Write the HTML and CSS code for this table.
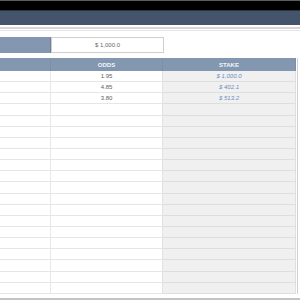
FILE: index.html
```html
<!DOCTYPE html>
<html>
<head>
<meta charset="utf-8">
<link rel="stylesheet" href="styles.css">
</head>
<body>
<div class="page">
  <div class="topblack"></div>
  <div class="titlebar"></div>
  <div class="rule rule-a"></div>
  <div class="rule rule-b"></div>
  <div class="bankroll">
    <div class="bank-label"></div>
    <div class="bank-value">$ 1,000.0</div>
  </div>
  <div class="table">
    <div class="row head">
      <div class="cell c1"></div>
      <div class="cell c2">ODDS</div>
      <div class="cell c3">STAKE</div>
    </div>
    <div class="row"><div class="cell c1"></div><div class="cell c2">1.95</div><div class="cell c3">$ 1,000.0</div></div>
    <div class="row"><div class="cell c1"></div><div class="cell c2">4.85</div><div class="cell c3">$ 402.1</div></div>
    <div class="row"><div class="cell c1"></div><div class="cell c2">3.80</div><div class="cell c3">$ 513.2</div></div>
    <div class="row"><div class="cell c1"></div><div class="cell c2"></div><div class="cell c3"></div></div>
    <div class="row"><div class="cell c1"></div><div class="cell c2"></div><div class="cell c3"></div></div>
    <div class="row"><div class="cell c1"></div><div class="cell c2"></div><div class="cell c3"></div></div>
    <div class="row"><div class="cell c1"></div><div class="cell c2"></div><div class="cell c3"></div></div>
    <div class="row"><div class="cell c1"></div><div class="cell c2"></div><div class="cell c3"></div></div>
    <div class="row"><div class="cell c1"></div><div class="cell c2"></div><div class="cell c3"></div></div>
    <div class="row"><div class="cell c1"></div><div class="cell c2"></div><div class="cell c3"></div></div>
    <div class="row"><div class="cell c1"></div><div class="cell c2"></div><div class="cell c3"></div></div>
    <div class="row"><div class="cell c1"></div><div class="cell c2"></div><div class="cell c3"></div></div>
    <div class="row"><div class="cell c1"></div><div class="cell c2"></div><div class="cell c3"></div></div>
    <div class="row"><div class="cell c1"></div><div class="cell c2"></div><div class="cell c3"></div></div>
    <div class="row"><div class="cell c1"></div><div class="cell c2"></div><div class="cell c3"></div></div>
    <div class="row"><div class="cell c1"></div><div class="cell c2"></div><div class="cell c3"></div></div>
    <div class="row"><div class="cell c1"></div><div class="cell c2"></div><div class="cell c3"></div></div>
    <div class="row"><div class="cell c1"></div><div class="cell c2"></div><div class="cell c3"></div></div>
    <div class="row"><div class="cell c1"></div><div class="cell c2"></div><div class="cell c3"></div></div>
    <div class="row"><div class="cell c1"></div><div class="cell c2"></div><div class="cell c3"></div></div>
  </div>
  <div class="bottomband"></div>
</div>
</body>
</html>
```
FILE: styles.css
```css
html, body {
  margin: 0;
  padding: 0;
  background: #ffffff;
}
body {
  font-family: "Liberation Sans", Arial, sans-serif;
  width: 300px;
  height: 300px;
  overflow: hidden;
}
.page {
  display: flex;
  flex-direction: column;
  width: 300px;
  height: 300px;
}
.topblack {
  height: 9px;
  background: #000000;
  border-top: 1px solid #5c5c5c;
}
.titlebar {
  height: 14px;
  background: #44546a;
  border-top: 1px solid #2c3544;
}
.rule {
  height: 1px;
}
.rule-a {
  margin-top: 2px;
  height: 2px;
  background: #dcd4d4;
}
.rule-b {
  margin-top: 1px;
  background: #e2e6ec;
}
.bankroll {
  display: flex;
  margin-top: 6px;
  height: 16px;
}
.bank-label {
  width: 50px;
  background: #8497b0;
  border-right: 1px solid #6f7f96;
}
.bank-value {
  width: 111px;
  border: 1px solid #cfcfcf;
  display: flex;
  align-items: center;
  justify-content: center;
  font-size: 6px;
  color: #666666;
}
.table {
  margin-top: 5px;
  width: 298px;
  display: flex;
  flex-direction: column;
}
.row {
  display: grid;
  grid-template-columns: 51px 112px 133px 2px;
  height: 11.15px;
  box-sizing: border-box;
}
.row::after {
  content: "";
  background: #ffffff;
  border-right: 1px solid #cfcfcf;
}
.cell {
  display: flex;
  align-items: center;
  justify-content: center;
  font-size: 6px;
  color: #5e5e5e;
  border-bottom: 1px solid #e6e6e6;
  box-sizing: border-box;
}
.c1 {
  border-right: 1px solid #e8e8e8;
}
.c2 {
  border-right: 1px solid #e2e2e2;
}
.c3 {
  background: #f0f0f0;
  border-bottom-color: #dedede;
  border-right: 1px solid #e0e0e0;
  color: #6a8cc0;
  font-style: italic;
}
.row.head {
  height: 13px;
}
.row.head .cell {
  background: #8497b0;
  color: #f4f6fa;
  font-weight: bold;
  font-style: normal;
  border-bottom: none;
  border-right-color: #7d8fa8;
}
.bottomband {
  margin-top: auto;
  height: 2px;
  background: #c4c4c4;
}
```
